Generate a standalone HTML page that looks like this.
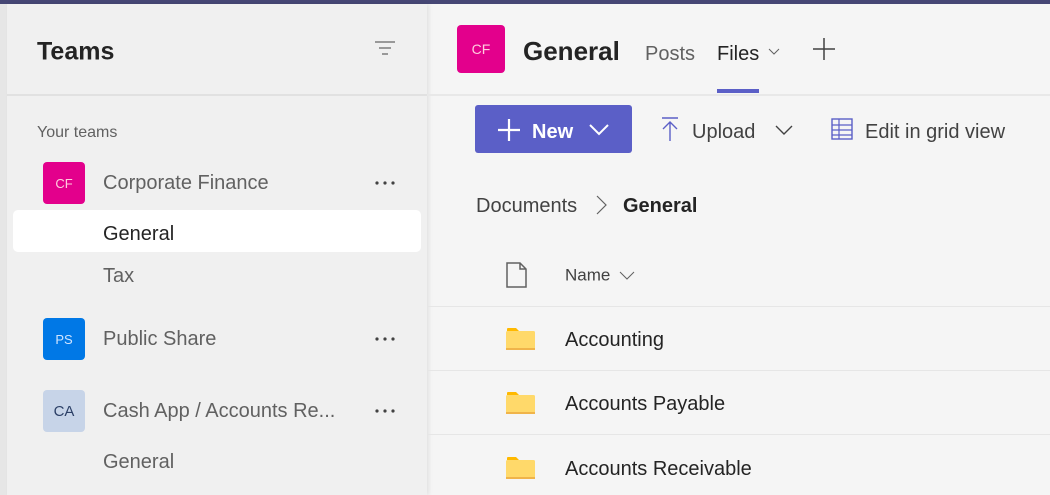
<!DOCTYPE html>
<html><head><style>
*{margin:0;padding:0;box-sizing:border-box}
body{width:1050px;height:495px;overflow:hidden;background:#f5f5f5;font-family:"Segoe UI","Liberation Sans",sans-serif;position:relative;color:#242424}
.a{position:absolute;white-space:nowrap}
.c{line-height:1;transform:translateY(-50%)}
.av{position:absolute;width:42px;height:42px;border-radius:4px;color:#fff;font-size:13px;display:flex;align-items:center;justify-content:center}
.side{font-size:20px;color:#616161}
.row{font-size:20px;color:#242424}
</style></head><body>
<div class="a" style="left:0;top:0;width:1050px;height:4px;background:#464775"></div>
<div class="a" style="left:0;top:4px;width:7px;height:491px;background:#e6e6e6"></div>
<div class="a" style="left:7px;top:4px;width:420px;height:491px;background:#f0f0f0;box-shadow:2px 0 4px rgba(0,0,0,.08)"></div>
<div class="a" style="left:7px;top:94px;width:420px;height:2px;background:#e1e1e1"></div>
<div class="a" style="left:427px;top:94px;width:623px;height:2px;background:#e8e8e8"></div>

<div class="a c" style="left:37px;top:52px;font-size:25px;font-weight:bold">Teams</div>
<svg class="a" style="left:374px;top:40px" width="22" height="16"><path d="M1 2H21M5 8H17M8 14H14" stroke="#424242" stroke-width="1"/></svg>
<div class="a c" style="left:37px;top:133px;font-size:16px;color:#616161">Your teams</div>

<svg width="0" height="0" style="position:absolute"><defs><g id="d"><circle cx="2" cy="2" r="1.6" fill="#424242"/><circle cx="10" cy="2" r="1.6" fill="#424242"/><circle cx="18" cy="2" r="1.6" fill="#424242"/></g></defs></svg>

<div class="av" style="left:43px;top:162px;background:#e3008c;color:#fcd">CF</div>
<div class="a c side" style="left:103px;top:183px">Corporate Finance</div>
<svg class="a" style="left:375px;top:181px" width="21" height="4"><use href="#d"/></svg>
<div class="a" style="left:13px;top:210px;width:408px;height:42px;background:#fff;border-radius:5px"></div>
<div class="a c row" style="left:103px;top:234px">General</div>
<div class="a c side" style="left:103px;top:276px">Tax</div>

<div class="av" style="left:43px;top:318px;background:#0078e6;color:#cfe4ff">PS</div>
<div class="a c side" style="left:103px;top:339px">Public Share</div>
<svg class="a" style="left:375px;top:337px" width="21" height="4"><use href="#d"/></svg>
<div class="av" style="left:43px;top:390px;background:#c7d4e8;color:#2b3f66;font-size:15px">CA</div>
<div class="a c side" style="left:103px;top:411px">Cash App / Accounts Re...</div>
<svg class="a" style="left:375px;top:409px" width="21" height="4"><use href="#d"/></svg>
<div class="a c side" style="left:103px;top:462px">General</div>

<div class="av" style="left:457px;top:25px;width:48px;height:48px;background:#e3008c;color:#fcd;font-size:14px">CF</div>
<div class="a c" style="left:523px;top:51px;font-size:26px;font-weight:bold">General</div>
<div class="a c" style="left:645px;top:54px;font-size:20px;color:#616161">Posts</div>
<div class="a c" style="left:717px;top:54px;font-size:20px">Files</div>
<svg class="a" style="left:768px;top:48px" width="12" height="8"><path d="M1 1L6 6L11 1" stroke="#616161" fill="none"/></svg>
<div class="a" style="left:717px;top:89px;width:42px;height:4px;background:#5b5fc7"></div>
<svg class="a" style="left:813px;top:38px" width="22" height="22"><path d="M11 0V22M0 11H22" stroke="#424242" stroke-width="1.5"/></svg>

<div class="a" style="left:475px;top:105px;width:157px;height:48px;background:#5b5fc7;border-radius:3px"></div>
<svg class="a" style="left:498px;top:119px" width="22" height="22"><path d="M11 0V22M0 11H22" stroke="#fff" stroke-width="2.2"/></svg>
<div class="a c" style="left:532px;top:132px;font-size:20px;font-weight:bold;color:#fff">New</div>
<svg class="a" style="left:589px;top:124px" width="20" height="12"><path d="M1 1L10 10L19 1" stroke="#fff" stroke-width="2" fill="none"/></svg>
<svg class="a" style="left:660px;top:117px" width="20" height="26"><path d="M2 1H18M10 5V24M3 12L10 5L17 12" stroke="#5b5fc7" stroke-width="1.4" fill="none"/></svg>
<div class="a c" style="left:692px;top:132px;font-size:20px;color:#424242">Upload</div>
<svg class="a" style="left:775px;top:125px" width="18" height="11"><path d="M1 1L9 9L17 1" stroke="#424242" stroke-width="1.4" fill="none"/></svg>
<svg class="a" style="left:831px;top:118px" width="22" height="22"><rect x="1" y="1" width="20" height="20" fill="none" stroke="#5b5fc7" stroke-width="1.4"/><path d="M1 7H21M1 12H21M1 17H21M8 1V21" stroke="#5b5fc7" stroke-width="1.2"/></svg>
<div class="a c" style="left:865px;top:132px;font-size:20px;color:#424242">Edit in grid view</div>

<div class="a c" style="left:476px;top:206px;font-size:20px;color:#424242">Documents</div>
<svg class="a" style="left:596px;top:195px" width="12" height="20"><path d="M1 1L10 10L1 19" stroke="#616161" stroke-width="1.2" fill="none"/></svg>
<div class="a c" style="left:623px;top:206px;font-size:20px;font-weight:bold">General</div>

<svg class="a" style="left:506px;top:262px" width="22" height="26"><path d="M1 1H14L20 7V25H1Z M14 1V7H20" stroke="#616161" stroke-width="1.5" fill="none"/></svg>
<div class="a c" style="left:565px;top:275px;font-size:17px;color:#424242">Name</div>
<svg class="a" style="left:619px;top:271px" width="16" height="9"><path d="M1 1L8 8L15 1" stroke="#616161" fill="none"/></svg>
<div class="a" style="left:427px;top:306px;width:623px;height:1px;background:#e6e6e6"></div>
<div class="a" style="left:427px;top:370px;width:623px;height:1px;background:#e6e6e6"></div>
<div class="a" style="left:427px;top:434px;width:623px;height:1px;background:#e6e6e6"></div>

<svg class="a" style="left:506px;top:327px" width="29" height="23"><path d="M1 2Q1 1 2 1H10L13 4H1Z" fill="#ffb900"/><rect x="0" y="4" width="29" height="19" rx="1.5" fill="#ffd96a"/><rect x="0" y="21" width="29" height="2" fill="#f0b44a"/></svg>
<div class="a c row" style="left:565px;top:340px">Accounting</div>
<svg class="a" style="left:506px;top:391px" width="29" height="23"><path d="M1 2Q1 1 2 1H10L13 4H1Z" fill="#ffb900"/><rect x="0" y="4" width="29" height="19" rx="1.5" fill="#ffd96a"/><rect x="0" y="21" width="29" height="2" fill="#f0b44a"/></svg>
<div class="a c row" style="left:565px;top:404px">Accounts Payable</div>
<svg class="a" style="left:506px;top:456px" width="29" height="23"><path d="M1 2Q1 1 2 1H10L13 4H1Z" fill="#ffb900"/><rect x="0" y="4" width="29" height="19" rx="1.5" fill="#ffd96a"/><rect x="0" y="21" width="29" height="2" fill="#f0b44a"/></svg>
<div class="a c row" style="left:565px;top:469px">Accounts Receivable</div>
</body></html>
